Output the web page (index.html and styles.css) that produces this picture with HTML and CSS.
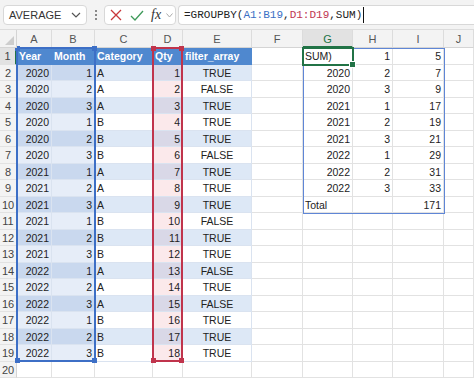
FILE: index.html
```html
<!DOCTYPE html>
<html lang="en">
<head>
    <meta charset="UTF-8">
    <title>GROUPBY</title>
    <link rel="stylesheet" href="styles.css">
</head>
<body>
    <div class="fbar">
        <div class="namebox">
            <span>AVERAGE</span>
            <svg width="10" height="6" viewBox="0 0 10 6"><path d="M1 1 L5 5 L9 1" fill="none" stroke="#555" stroke-width="1.2"/></svg>
        </div>
        <div class="grip"><i></i><i></i><i></i></div>
        <div class="fbtns">
            <svg width="12" height="12" viewBox="0 0 12 12"><path d="M1 1 L11 11 M11 1 L1 11" stroke="#c9373b" stroke-width="1.3"/></svg>
            <svg width="14" height="11" viewBox="0 0 14 11"><path d="M1 6 L5 10 L13 1" fill="none" stroke="#3f9a5a" stroke-width="1.3"/></svg>
            <span class="fx">fx</span>
            <svg width="7" height="5" viewBox="0 0 7 5"><path d="M0.5 0.5 L3.5 4 L6.5 0.5" fill="none" stroke="#aaa" stroke-width="1"/></svg>
        </div>
        <div class="finput">=GROUPBY(<span class="rb">A1:B19</span>,<span class="rr">D1:D19</span>,SUM)<span class="caret"></span></div>
    </div>

    <div class="sheet" id="sheet">
        <div class="ref blue"><i class="h tl"></i><i class="h tr"></i><i class="h bl"></i><i class="h br"></i></div>
        <div class="ref red"><i class="h tl"></i><i class="h tr"></i><i class="h bl"></i><i class="h br"></i></div>
        <div class="spill"></div>
        <div class="active"><i class="fill"></i></div>
    </div>

    <script>
        const cols = ['A', 'B', 'C', 'D', 'E', 'F', 'G', 'H', 'I', 'J'];
        const table = [
            ['Year', 'Month', 'Category', 'Qty', 'filter_array'],
            [2020, 1, 'A', 1, 'TRUE'], [2020, 2, 'A', 2, 'FALSE'], [2020, 3, 'A', 3, 'TRUE'],
            [2020, 1, 'B', 4, 'TRUE'], [2020, 2, 'B', 5, 'TRUE'], [2020, 3, 'B', 6, 'FALSE'],
            [2021, 1, 'A', 7, 'TRUE'], [2021, 2, 'A', 8, 'TRUE'], [2021, 3, 'A', 9, 'TRUE'],
            [2021, 1, 'B', 10, 'FALSE'], [2021, 2, 'B', 11, 'TRUE'], [2021, 3, 'B', 12, 'TRUE'],
            [2022, 1, 'A', 13, 'FALSE'], [2022, 2, 'A', 14, 'TRUE'], [2022, 3, 'A', 15, 'FALSE'],
            [2022, 1, 'B', 16, 'TRUE'], [2022, 2, 'B', 17, 'TRUE'], [2022, 3, 'B', 18, 'TRUE']
        ];
        const result = [
            ['SUM)', 1, 5], [2020, 2, 7], [2020, 3, 9], [2021, 1, 17], [2021, 2, 19],
            [2021, 3, 21], [2022, 1, 29], [2022, 2, 31], [2022, 3, 33], ['Total', '', 171]
        ];
        const tableAlign = ['num', 'num', 'txt', 'num', 'bool'];

        const sheet = document.getElementById('sheet');
        function add(cls, text) {
            const d = document.createElement('div');
            d.className = cls;
            if (text !== undefined) d.textContent = text;
            sheet.appendChild(d);
        }

        add('corner');
        cols.forEach(c => add('colhead' + (c === 'G' ? ' sel' : ''), c));

        for (let r = 1; r <= 20; r++) {
            add('rowhead' + (r === 1 ? ' sel' : ''), r);
            cols.forEach((c, i) => {
                let cls = 'cell';
                let text = '';
                if (i < 5 && r <= 19) {
                    text = table[r - 1][i];
                    if (r === 1) {
                        cls += ' th txt';
                    } else {
                        cls += ' tb ' + tableAlign[i];
                        if (r % 2 === 0) cls += ' band';
                        if (i < 2) cls += ' selb';
                        if (i === 3) cls += ' selr';
                    }
                } else if (i >= 6 && i <= 8 && r <= 10) {
                    text = result[r - 1][i - 6];
                    cls += typeof text === 'number' ? ' num' : ' txt';
                }
                add(cls, text);
            });
        }
    </script>
</body>
</html>
```

FILE: styles.css
```css
body {
    margin: 0;
    font-family: "Liberation Sans", Arial, sans-serif;
    font-size: 10.5px;
    color: #222;
    background: #fff;
    overflow: hidden;
}

/* formula bar */
.fbar {
    height: 30px;
    box-sizing: border-box;
    background: #f3f3f3;
    border-bottom: 1px solid #dcdcdc;
    display: flex;
    align-items: flex-start;
    padding: 5px 0 0 3px;
}
.namebox {
    width: 84px;
    height: 20px;
    box-sizing: border-box;
    background: #fff;
    border: 1px solid #d8d8d8;
    border-radius: 4px;
    display: flex;
    align-items: center;
    justify-content: space-between;
    padding: 0 5px 0 5px;
    font-size: 11px;
    color: #333;
}
.grip {
    width: 17px;
    height: 20px;
    display: flex;
    flex-direction: column;
    align-items: center;
    justify-content: center;
    gap: 2px;
}
.grip i {
    width: 2px;
    height: 2px;
    border-radius: 1px;
    background: #666;
}
.fbtns {
    width: 72px;
    height: 20px;
    box-sizing: border-box;
    background: #fff;
    border: 1px solid #d8d8d8;
    border-radius: 4px;
    display: flex;
    align-items: center;
    padding: 0 0 0 5px;
    gap: 8px;
}
.fx {
    font-family: "Liberation Serif", "Times New Roman", serif;
    font-style: italic;
    font-size: 14px;
    color: #333;
    margin-left: -1px;
    margin-right: -3px;
}
.finput {
    flex: 1;
    height: 20px;
    box-sizing: border-box;
    margin-left: 2px;
    background: #fff;
    border: 1px solid #d8d8d8;
    border-right: none;
    border-radius: 4px 0 0 4px;
    padding-left: 5px;
    font-family: "Liberation Mono", "Courier New", monospace;
    font-size: 11px;
    line-height: 18px;
    color: #222;
    display: flex;
    align-items: center;
    white-space: pre;
}
.rb { color: #3a6fc4; }
.rr { color: #c03550; }
.caret {
    width: 1px;
    height: 16px;
    background: #111;
    margin-left: 1px;
}

/* grid */
.sheet {
    position: relative;
    display: grid;
    grid-template-columns: 17px 35px 43px 58px 30px 69px 51px 50px 40px 51px 30px;
    grid-template-rows: 18px repeat(20, 16.5px);
}
.corner {
    background: #f3f3f3;
    border-right: 1px solid #d4d4d4;
    border-bottom: 1px solid #d4d4d4;
    position: relative;
}
.corner::after {
    content: "";
    position: absolute;
    right: 2px;
    bottom: 2px;
    border-left: 9px solid transparent;
    border-bottom: 9px solid #cdcdcd;
}
.colhead {
    background: #f3f3f3;
    border-right: 1px solid #dcdcdc;
    border-bottom: 1px solid #d4d4d4;
    color: #555;
    font-size: 11px;
    text-align: center;
    line-height: 18px;
}
.colhead.sel {
    background: #e2e2e2;
    color: #217346;
    border-bottom: 2px solid #217346;
}
.rowhead {
    background: #f3f3f3;
    border-right: 1px solid #d4d4d4;
    border-bottom: 1px solid #e2e2e2;
    color: #444;
    font-size: 11px;
    text-align: center;
    line-height: 16px;
}
.rowhead.sel {
    background: #e2e2e2;
    border-right: 2px solid #217346;
}
.cell {
    border-right: 1px solid #e2e2e2;
    border-bottom: 1px solid #e2e2e2;
    padding: 0 2px;
    line-height: 16px;
    white-space: nowrap;
    overflow: hidden;
}
.num { text-align: right; }
.txt { text-align: left; }
.bool { text-align: center; }

/* table style */
.th {
    background: #4f88cf;
    color: #fff;
    font-weight: bold;
    border-color: #4f88cf;
}
.tb { background: #fff; border-color: #dae3f0; }
.tb.band { background: #dde8f6; }
.tb.selb { background: #e6edf8; }
.tb.band.selb { background: #c9d8ee; }
.tb.selr { background: #fbe9eb; }
.tb.band.selr { background: #d9d8e7; }

/* overlays */
.ref {
    position: absolute;
    top: 17px;
    height: 315px;
    box-sizing: border-box;
    border: 2px solid;
}
.ref.blue { left: 16px; width: 80px; border-color: #3d6fc6; }
.ref.red { left: 152px; width: 31px; border-color: #c0344c; }
.ref .h {
    position: absolute;
    width: 5px;
    height: 5px;
}
.ref.blue .h { background: #3d6fc6; }
.ref.red .h { background: #c0344c; }
.h.tl { left: -3px; top: -3px; }
.h.tr { right: -3px; top: -3px; }
.h.bl { left: -3px; bottom: -3px; }
.h.br { right: -3px; bottom: -3px; }
.spill {
    position: absolute;
    left: 303px;
    top: 18px;
    width: 142px;
    height: 166px;
    box-sizing: border-box;
    border: 1px solid #5f86d6;
}
.active {
    position: absolute;
    left: 302px;
    top: 17px;
    width: 52px;
    height: 19px;
    box-sizing: border-box;
    border: 2px solid #217346;
}
.active .fill {
    position: absolute;
    right: -4px;
    bottom: -4px;
    width: 5px;
    height: 5px;
    background: #217346;
    border: 1px solid #fff;
}
```
